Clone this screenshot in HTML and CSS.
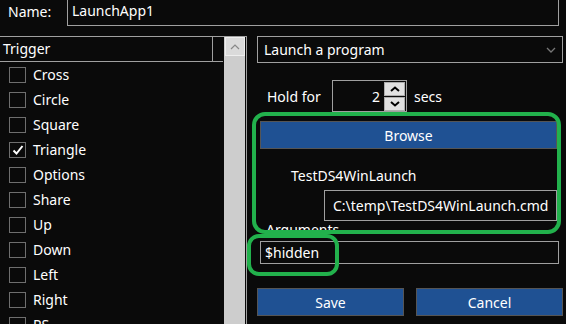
FILE: index.html
```html
<!DOCTYPE html>
<html>
<head>
  <link rel="stylesheet" href="styles.css">
</head>
<body>
  <div class="name-row">
    <span class="name-label">Name:</span>
    <div class="name-box">LaunchApp1</div>
  </div>

  <div class="main">
    <div class="list">
      <div class="list-body">
        <div class="list-header">
          <span class="header-cell">Trigger</span>
          <span class="header-rest"></span>
        </div>
        <div class="item"><span class="check"></span>Cross</div>
        <div class="item"><span class="check"></span>Circle</div>
        <div class="item"><span class="check"></span>Square</div>
        <div class="item">
          <span class="check">
            <svg width="14" height="14" viewBox="0 0 14 14"><polyline points="2.5,7.5 5.5,10.5 11.5,3" fill="none" stroke="#fff" stroke-width="2"/></svg>
          </span>Triangle
        </div>
        <div class="item"><span class="check"></span>Options</div>
        <div class="item"><span class="check"></span>Share</div>
        <div class="item"><span class="check"></span>Up</div>
        <div class="item"><span class="check"></span>Down</div>
        <div class="item"><span class="check"></span>Left</div>
        <div class="item"><span class="check"></span>Right</div>
        <div class="item"><span class="check"></span>PS</div>
      </div>
      <div class="scrollbar">
        <div class="scroll-up">
          <svg width="10" height="6" viewBox="0 0 10 6"><polyline points="1,5 5,1 9,5" fill="none" stroke="#888" stroke-width="1.2"/></svg>
        </div>
      </div>
    </div>

    <div class="panel">
      <div class="combo">
        <span>Launch a program</span>
        <svg width="10" height="6" viewBox="0 0 10 6"><polyline points="1,1 5,5 9,1" fill="none" stroke="#777" stroke-width="1.3"/></svg>
      </div>

      <div class="hold-row">
        <span class="hold-label">Hold for</span>
        <div class="spin">
          <span class="spin-value">2</span>
          <div class="spin-buttons">
            <div class="spin-btn">
              <svg width="10" height="6" viewBox="0 0 10 6"><polyline points="1,5 5,1.5 9,5" fill="none" stroke="#000" stroke-width="2"/></svg>
            </div>
            <div class="spin-btn">
              <svg width="10" height="6" viewBox="0 0 10 6"><polyline points="1,1 5,4.5 9,1" fill="none" stroke="#000" stroke-width="2"/></svg>
            </div>
          </div>
        </div>
        <span class="hold-unit">secs</span>
      </div>

      <button class="btn browse">Browse</button>
      <div class="file-name">TestDS4WinLaunch</div>
      <div class="field path">C:\temp\TestDS4WinLaunch.cmd</div>
      <div class="args-label">Arguments</div>
      <div class="field args">$hidden</div>

      <div class="actions">
        <button class="btn">Save</button>
        <button class="btn">Cancel</button>
      </div>
    </div>
  </div>

  <div class="mark mark-program"></div>
  <div class="mark mark-args"></div>
</body>
</html>
```

FILE: styles.css
```css
body {
  margin: 0;
  background: #0a0a0a;
  color: #fff;
  font-family: "Noto Sans", sans-serif;
  font-size: 14px;
  width: 566px;
  height: 324px;
  overflow: hidden;
}

.name-row {
  display: flex;
  align-items: flex-start;
  height: 26px;
}

.name-label {
  padding: 1px 0 0 8px;
  width: 59px;
  line-height: 22px;
}

.name-box {
  width: 486px;
  height: 25px;
  border: 1px solid #a0a0a0;
  border-top: none;
  padding-left: 4px;
  line-height: 22px;
}

.main {
  display: flex;
  margin-top: 10px;
}

.list {
  display: flex;
  width: 246px;
  height: 288px;
  border-top: 1px solid #a0a0a0;
  border-right: 1px solid #a0a0a0;
  overflow: hidden;
}

.list-body {
  width: 224px;
}

.list-header {
  display: flex;
  height: 24px;
  width: 223px;
  border-bottom: 1px solid #a0a0a0;
}

.header-cell {
  width: 209px;
  padding-left: 3px;
  border-right: 1px solid #a0a0a0;
  line-height: 23px;
}

.item {
  display: flex;
  align-items: center;
  height: 25px;
  padding-left: 9px;
}

.check {
  box-sizing: border-box;
  width: 17px;
  height: 16px;
  border: 1px solid #6e6e6e;
  margin-right: 7px;
  display: flex;
  align-items: center;
  justify-content: center;
}

.scrollbar {
  width: 21px;
  margin-right: 1px;
  background: #cdcdcd;
}

.scroll-up {
  box-sizing: border-box;
  height: 19px;
  margin: 0 0 0 1px;
  background: #dadada;
  border: 1px solid #eeeeee;
  display: flex;
  align-items: center;
  justify-content: center;
}

.panel {
  flex: 1;
  padding: 0 3px 0 10px;
}

.combo {
  box-sizing: border-box;
  height: 27px;
  border: 1px solid #a0a0a0;
  display: flex;
  align-items: center;
  justify-content: space-between;
  padding: 0 6px 0 6px;
}

.hold-row {
  display: flex;
  align-items: center;
  margin-top: 17px;
}

.hold-label {
  width: 65px;
  padding-left: 10px;
}

.spin {
  box-sizing: border-box;
  width: 75px;
  height: 32px;
  border: 1px solid #a0a0a0;
  display: flex;
  align-items: center;
  justify-content: flex-end;
}

.spin-value {
  margin-right: 4px;
}

.spin-buttons {
  display: flex;
  flex-direction: column;
  gap: 1px;
  width: 21px;
  margin-right: 1px;
}

.spin-btn {
  box-sizing: border-box;
  height: 14px;
  background: #e1e1e1;
  border: 1px solid #adadad;
  display: flex;
  align-items: center;
  justify-content: center;
}

.hold-unit {
  margin-left: 7px;
}

.btn {
  display: block;
  box-sizing: border-box;
  background: #1f5193;
  color: #fff;
  border: 1px solid #555;
  font-family: inherit;
  font-size: 14px;
  padding: 0;
}

.browse {
  width: 297px;
  height: 28px;
  margin: 9px 0 0 3px;
}

.file-name {
  margin: 17px 0 0 34px;
  line-height: 20px;
}

.field {
  box-sizing: border-box;
  border: 1px solid #a0a0a0;
  display: flex;
  align-items: center;
}

.path {
  width: 233px;
  height: 31px;
  margin: 4px 0 0 67px;
  padding-left: 8px;
}

.args-label {
  height: 12px;
  overflow: hidden;
  line-height: 18px;
  margin-left: 9px;
}

.args {
  width: 299px;
  height: 23px;
  margin: 8px 0 0 3px;
  padding-left: 4px;
}

.actions {
  display: flex;
  justify-content: space-between;
  margin-top: 24px;
}

.actions .btn {
  width: 147px;
  height: 28px;
}

/* green annotation marks drawn over the form */
.mark {
  position: absolute;
  box-sizing: border-box;
  border: 4px solid #22b14c;
  border-radius: 13px;
}

.mark-program {
  left: 252px;
  top: 112px;
  width: 309px;
  height: 122px;
}

.mark-args {
  left: 247px;
  top: 234px;
  width: 92px;
  height: 42px;
  border-radius: 12px;
}
```
